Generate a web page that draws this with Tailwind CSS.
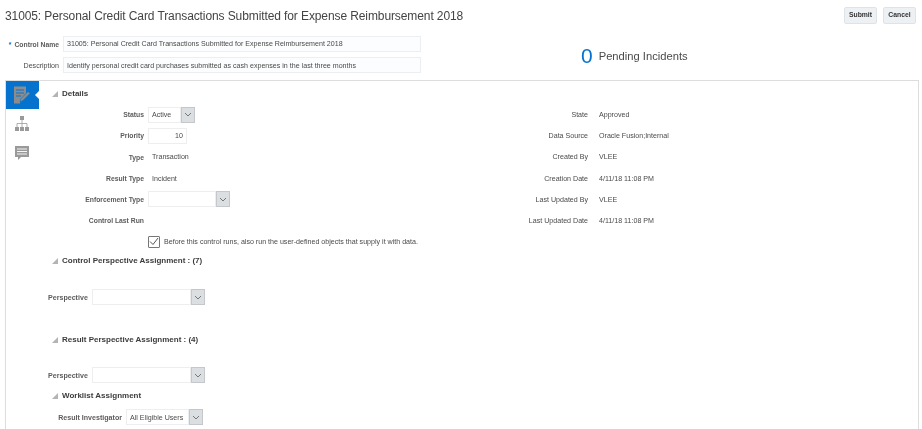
<!DOCTYPE html>
<html lang="en">
<head>
<meta charset="UTF-8" />
<title>Control 31005</title>
<script src="https://cdn.jsdelivr.net/npm/@tailwindcss/browser@4"></script>
</head>
<body class="bg-white">
<div class="w-[922px] h-[429px] overflow-hidden blur-[0.3px] font-['Liberation_Sans',Arial,sans-serif] text-[#4a4a4a] text-[7.1px] leading-none">

  <!-- Header -->
  <header class="flex items-center justify-between h-[30px] pl-[5px] pr-[6px]">
    <h1 class="pt-[2px] text-[12px] tracking-[-0.1px] text-[#444444]">31005: Personal Credit Card Transactions Submitted for Expense Reimbursement 2018</h1>
    <div class="flex gap-[6px]">
      <button class="w-[33px] h-[17px] bg-[#eef1f4] border border-[#dfe3e7] rounded-[2px] font-bold text-[#333] text-[6.8px]">Submit</button>
      <button class="w-[33px] h-[17px] bg-[#eef1f4] border border-[#dfe3e7] rounded-[2px] font-bold text-[#333] text-[6.8px]">Cancel</button>
    </div>
  </header>

  <!-- Name, description, pending count -->
  <section class="flex h-[50px] pt-[6px]">
    <div class="flex flex-col gap-[5px] w-[421px]">
      <div class="flex items-center">
        <label class="w-[60px] pr-px pt-[2px] text-right font-bold text-[#5c5c5c] text-[6.8px] whitespace-nowrap"><span class="text-[#0572ce] mr-[3px]">*</span>Control Name</label>
        <div class="ml-[3px] w-[358px] h-[16px] flex items-center pl-[3px] pt-[2px] border border-[#eceef0] bg-[#fcfdfe]">31005: Personal Credit Card Transactions Submitted for Expense Reimbursement 2018</div>
      </div>
      <div class="flex items-center">
        <label class="w-[60px] pr-px pt-[3px] text-right">Description</label>
        <div class="ml-[3px] w-[358px] h-[16px] flex items-center pl-[3px] pt-[3px] border border-[#eceef0] bg-[#fcfdfe]">Identify personal credit card purchases submitted as cash expenses in the last three months</div>
      </div>
    </div>
    <div class="flex items-center h-[38px] ml-[160px] gap-[6px]">
      <span class="text-[21px] text-[#0572ce]">0</span>
      <span class="pt-[3px] text-[11.200px] text-[#4a4a4a]">Pending Incidents</span>
    </div>
  </section>

  <!-- Panel -->
  <main class="flex h-[349px] ml-[5px] mr-[3px] border-l border-r border-t border-[#dddddd]">
    <nav class="w-[33px] shrink-0 flex flex-col items-center">
      <div class="relative w-full h-[28px] bg-[#0572ce] flex items-center justify-center">
        <svg width="20" height="20" viewBox="0 0 20 20" class="-ml-[3px]">
          <path d="M3 1.500h12v7l-5 6-1 4H3z" fill="#8c8c8c"/>
          <path d="M5 5h8M5 8h8M5 11h5" stroke="#0572ce" stroke-width="1.2"/>
          <path d="M9 17l1-3.500 7-7 2 2-7 7z" fill="#8c8c8c" stroke="#0572ce" stroke-width=".6"/>
        </svg>
        <span class="absolute right-0 top-[10px] w-0 h-0 border-y-[4px] border-y-transparent border-r-[4px] border-r-white"></span>
      </div>
      <svg width="18" height="18" viewBox="0 0 18 18" class="mt-[6px] -ml-[2px]">
        <path d="M7 1h4v4H7zM2 12h4v4H2zM7 12h4v4H7zM12 12h4v4h-4z" fill="#9a9a9a"/>
        <path d="M9 5v7M4 12V8.500h10V12" fill="none" stroke="#9a9a9a" stroke-width=".8"/>
      </svg>
      <svg width="18" height="18" viewBox="0 0 18 18" class="mt-[11px] -ml-[2px]">
        <path d="M2 2h14v11H8l-3 3v-3H2z" fill="#9a9a9a"/>
        <path d="M4 5h10M4 7.500h10M4 10h10" stroke="#fff" stroke-width=".9"/>
      </svg>
    </nav>

    <div class="flex-1 relative">
      <!-- Details -->
      <h2 class="flex items-center h-[12px] mt-[7px] ml-[13px] gap-[4px] text-[8px] font-bold text-[#3c3c3c]">
        <svg width="6" height="6" viewBox="0 0 6 6"><path d="M6 0v6H0z" fill="#b4b4b4"/></svg>Details
      </h2>
      <div class="flex mt-[5px]">
        <dl class="w-[489px] grid grid-cols-[105px_1fr] auto-rows-[21.200px] items-center">
          <dt class="text-right font-bold text-[#5c5c5c] text-[6.8px]">Status</dt>
          <dd class="ml-[4px] -mt-[2px] flex items-center">
            <span class="w-[33px] h-[16px] flex items-center pl-[3px] pt-[2px] border border-[#eceef0]">Active</span>
            <span class="w-[14px] h-[16px] bg-[#dcdfe2] border border-[#c4c8cc] flex items-center justify-center"><svg width="8" height="5" viewBox="0 0 8 5"><path d="M1 1l3 3 3-3" fill="none" stroke="#6b6b6b" stroke-width=".9"/></svg></span>
          </dd>
          <dt class="text-right font-bold text-[#5c5c5c] text-[6.8px]">Priority</dt>
          <dd class="ml-[4px] -mt-[2px]"><span class="w-[39px] h-[16px] flex items-center justify-end pr-[3px] pt-[2px] border border-[#eceef0]">10</span></dd>
          <dt class="text-right font-bold text-[#5c5c5c] text-[6.8px]">Type</dt>
          <dd class="ml-[8px]">Transaction</dd>
          <dt class="text-right font-bold text-[#5c5c5c] text-[6.8px]">Result Type</dt>
          <dd class="ml-[8px]">Incident</dd>
          <dt class="text-right font-bold text-[#5c5c5c] text-[6.8px]">Enforcement Type</dt>
          <dd class="ml-[4px] -mt-[2px] flex items-center">
            <span class="w-[68px] h-[16px] border border-[#eceef0]"></span>
            <span class="w-[14px] h-[16px] bg-[#dcdfe2] border border-[#c4c8cc] flex items-center justify-center"><svg width="8" height="5" viewBox="0 0 8 5"><path d="M1 1l3 3 3-3" fill="none" stroke="#6b6b6b" stroke-width=".9"/></svg></span>
          </dd>
          <dt class="text-right font-bold text-[#5c5c5c] text-[6.8px]">Control Last Run</dt>
          <dd></dd>
          <dd class="col-start-2 ml-[4px] flex items-center gap-[4px]">
            <span class="w-[12px] h-[12px] -mt-[2px] border border-[#777] rounded-[1px] flex items-center justify-center"><svg width="10" height="9" viewBox="0 0 10 9"><path d="M1 4.500l3 3 5-6.500" fill="none" stroke="#555" stroke-width="1"/></svg></span>
            <span class="whitespace-nowrap">Before this control runs, also run the user-defined objects that supply it with data.</span>
          </dd>
        </dl>
        <dl class="grid grid-cols-[60px_1fr] auto-rows-[21.200px] items-center w-[200px]">
          <dt class="text-right">State</dt><dd class="ml-[11px]">Approved</dd>
          <dt class="text-right">Data Source</dt><dd class="ml-[11px]">Oracle Fusion;Internal</dd>
          <dt class="text-right">Created By</dt><dd class="ml-[11px]">VLEE</dd>
          <dt class="text-right">Creation Date</dt><dd class="ml-[11px]">4/11/18 11:08 PM</dd>
          <dt class="text-right whitespace-nowrap">Last Updated By</dt><dd class="ml-[11px]">VLEE</dd>
          <dt class="text-right whitespace-nowrap">Last Updated Date</dt><dd class="ml-[11px]">4/11/18 11:08 PM</dd>
        </dl>
      </div>

      <!-- Control Perspective -->
      <h2 class="flex items-center h-[12px] mt-[2px] ml-[13px] gap-[4px] text-[8px] font-bold text-[#3c3c3c]">
        <svg width="6" height="6" viewBox="0 0 6 6"><path d="M6 0v6H0z" fill="#b4b4b4"/></svg>Control Perspective Assignment : (7)
      </h2>
      <div class="flex items-center mt-[22px] ml-[9px]">
        <label class="w-[41px] pt-[2px] font-bold text-[#5c5c5c]">Perspective</label>
        <span class="ml-[3px] w-[99px] h-[16px] border border-[#eceef0]"></span>
        <span class="w-[14px] h-[16px] bg-[#dcdfe2] border border-[#c4c8cc] flex items-center justify-center"><svg width="8" height="5" viewBox="0 0 8 5"><path d="M1 1l3 3 3-3" fill="none" stroke="#6b6b6b" stroke-width=".9"/></svg></span>
      </div>

      <!-- Result Perspective -->
      <h2 class="flex items-center h-[12px] mt-[29px] ml-[13px] gap-[4px] text-[8px] font-bold text-[#3c3c3c]">
        <svg width="6" height="6" viewBox="0 0 6 6"><path d="M6 0v6H0z" fill="#b4b4b4"/></svg>Result Perspective Assignment : (4)
      </h2>
      <div class="flex items-center mt-[21px] ml-[9px]">
        <label class="w-[41px] pt-[2px] font-bold text-[#5c5c5c]">Perspective</label>
        <span class="ml-[3px] w-[99px] h-[16px] border border-[#eceef0]"></span>
        <span class="w-[14px] h-[16px] bg-[#dcdfe2] border border-[#c4c8cc] flex items-center justify-center"><svg width="8" height="5" viewBox="0 0 8 5"><path d="M1 1l3 3 3-3" fill="none" stroke="#6b6b6b" stroke-width=".9"/></svg></span>
      </div>

      <!-- Worklist -->
      <h2 class="flex items-center h-[12px] mt-[7px] ml-[13px] gap-[4px] text-[8px] font-bold text-[#3c3c3c]">
        <svg width="6" height="6" viewBox="0 0 6 6"><path d="M6 0v6H0z" fill="#b4b4b4"/></svg>Worklist Assignment
      </h2>
      <div class="flex items-center mt-[7px]">
        <label class="w-[84px] pr-px pt-[2px] text-right font-bold text-[#5c5c5c] whitespace-nowrap">Result Investigator</label>
        <span class="ml-[3px] w-[63px] h-[16px] flex items-center pl-[3px] pt-[2px] border border-[#eceef0]">All Eligible Users</span>
        <span class="w-[14px] h-[16px] bg-[#dcdfe2] border border-[#c4c8cc] flex items-center justify-center"><svg width="8" height="5" viewBox="0 0 8 5"><path d="M1 1l3 3 3-3" fill="none" stroke="#6b6b6b" stroke-width=".9"/></svg></span>
      </div>
    </div>
  </main>
</div>
</body>
</html>
